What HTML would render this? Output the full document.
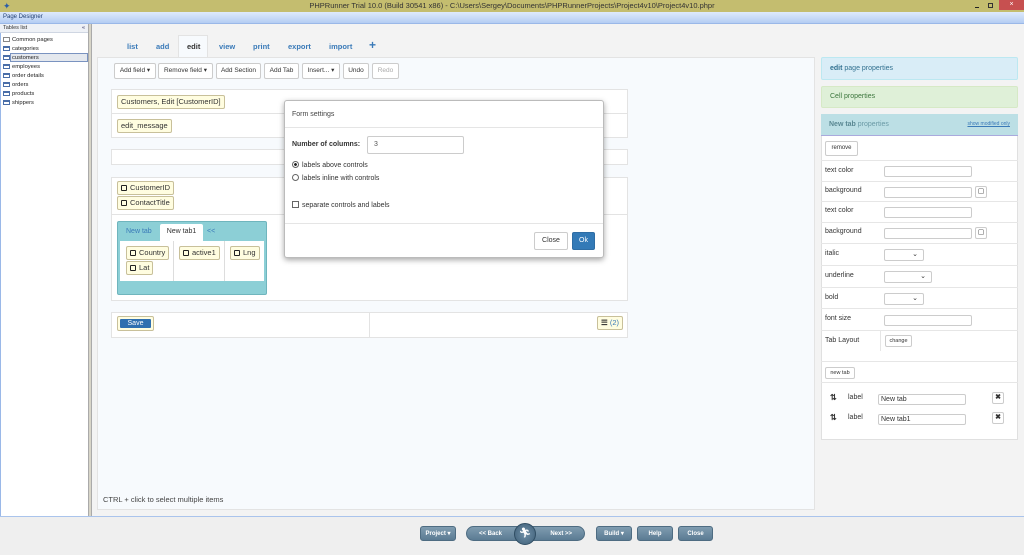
<!DOCTYPE html>
<html><head><meta charset="utf-8"><style>
*{box-sizing:border-box;margin:0;padding:0}
body{width:1024px;height:555px;overflow:hidden;font-family:"Liberation Sans",sans-serif;background:#efefef;position:relative;font-size:7px;color:#333}
.a{position:absolute}
.btn{position:absolute;background:#fff;border:1px solid #ccc;border-radius:2px;font-size:6.5px;color:#333;text-align:center;line-height:14px;height:16px}
.chip{position:absolute;background:#fffde0;border:1px solid #c8c09a;border-radius:2px;font-size:7.5px;line-height:12px;height:14px;padding:0 3px;color:#333}
.chip i{display:inline-block;width:6px;height:6px;border:1.5px solid #222;border-radius:1px;margin-right:3px;vertical-align:-0.5px}
.sec{position:absolute;background:#fff;border:1px solid #e3e3e3}
.tb{position:absolute;font-size:7.5px;font-weight:bold;color:#3a7ab8;top:42px}
.row{position:absolute;left:821px;width:197px;border-bottom:1px solid #e6e6e6;font-size:7px;color:#333}
.inp{position:absolute;background:#fff;border:1px solid #ccc;border-radius:2px;height:11px}
.bb{position:absolute;top:526px;height:15px;background:linear-gradient(#7f9cb0,#5b7b93);border:1px solid #4e6c82;border-radius:3px;color:#fff;font-size:6px;font-weight:bold;text-align:center;line-height:14px}
.li{position:absolute;left:3px;font-size:5.8px;line-height:8px;height:9px;color:#222}
.li b{display:inline-block;width:7px;height:5px;border:1px solid #4a6ea8;border-top-width:2px;margin-right:2px;vertical-align:-0.5px}
</style></head><body>
<div class="a" style="left:0;top:0;width:1024px;height:12px;background:#c4bd6f"></div>
<div class="a" style="left:3px;top:1px;font-size:9px;color:#2a5da8">✦</div>
<div class="a" style="left:0;top:1px;width:1024px;text-align:center;font-size:7.5px;color:#333">PHPRunner Trial 10.0 (Build 30541 x86) - C:\Users\Sergey\Documents\PHPRunnerProjects\Project4v10\Project4v10.phpr</div>
<div class="a" style="left:975px;top:7px;width:4px;height:1px;background:#222"></div>
<div class="a" style="left:988px;top:3px;width:5px;height:5px;border:1px solid #333"></div>
<div class="a" style="left:999px;top:0;width:25px;height:10px;background:#c75050;color:#fff;font-size:7px;text-align:center;line-height:10px">×</div>
<div class="a" style="left:0;top:12px;width:1024px;height:12px;background:linear-gradient(#dfeafc,#b4cdf3);border-bottom:1px solid #9ab8e8"></div>
<div class="a" style="left:3px;top:14px;font-size:6px;color:#1e3c70">Page Designer</div>
<div class="a" style="left:0;top:24px;width:88px;height:493px;background:#fff;border-left:1px solid #9ab8e8"></div>
<div class="a" style="left:0;top:24px;width:88px;height:9px;background:#eef1f6;border-bottom:1px solid #cfd6e2;font-size:5.5px;line-height:9px;padding-left:3px">Tables list<span style="position:absolute;right:3px;color:#225">«</span></div>
<div class="a" style="left:10px;top:53px;width:78px;height:9px;background:#e4e8ee;border:1px solid #7a93c0"></div>
<div class="li" style="top:36px"><b style="border-color:#888;border-top-width:1px"></b>Common pages</div>
<div class="li" style="top:45px"><b></b>categories</div>
<div class="li" style="top:54px"><b></b>customers</div>
<div class="li" style="top:63px"><b></b>employees</div>
<div class="li" style="top:72px"><b></b>order details</div>
<div class="li" style="top:81px"><b></b>orders</div>
<div class="li" style="top:90px"><b></b>products</div>
<div class="li" style="top:99px"><b></b>shippers</div>
<div class="a" style="left:88px;top:24px;width:4px;height:493px;background:#d8d5c8;border-left:1px solid #aaa;border-right:1px solid #aaa"></div>
<div class="a" style="left:92px;top:24px;width:932px;height:493px;background:#f3f3f3"></div>
<div class="a" style="left:0;top:516px;width:1024px;height:1px;background:#aac4ec"></div>
<div class="a" style="left:178px;top:35px;width:30px;height:23px;background:#f7fafd;border:1px solid #e3e3e3;border-bottom:none"></div>
<div class="tb" style="left:127px">list</div><div class="tb" style="left:156px">add</div><div class="tb" style="left:187px;color:#333">edit</div><div class="tb" style="left:219px">view</div><div class="tb" style="left:253px">print</div><div class="tb" style="left:288px">export</div><div class="tb" style="left:329px">import</div><div class="tb" style="left:369px;font-size:12px;top:38px">+</div>
<div class="a" style="left:97px;top:57px;width:718px;height:453px;background:#f7fafd;border:1px solid #e3e3e3"></div>
<div class="a" style="left:208px;top:57px;width:607px;height:1px;background:#e3e3e3"></div>
<div class="btn" style="left:114px;top:63px;width:42px">Add field ▾</div>
<div class="btn" style="left:158px;top:63px;width:55px">Remove field ▾</div>
<div class="btn" style="left:216px;top:63px;width:45px">Add Section</div>
<div class="btn" style="left:264px;top:63px;width:35px">Add Tab</div>
<div class="btn" style="left:302px;top:63px;width:38px">Insert... ▾</div>
<div class="btn" style="left:343px;top:63px;width:26px">Undo</div>
<div class="btn" style="left:372px;top:63px;width:27px;color:#aaa">Redo</div>
<div class="sec" style="left:111px;top:89px;width:517px;height:49px"></div>
<div class="a" style="left:112px;top:113px;width:515px;height:1px;background:#e3e3e3"></div>
<div class="chip" style="left:117px;top:95px">Customers, Edit [CustomerID]</div>
<div class="chip" style="left:117px;top:119px">edit_message</div>
<div class="sec" style="left:111px;top:149px;width:517px;height:16px"></div>
<div class="sec" style="left:111px;top:177px;width:517px;height:124px"></div>
<div class="a" style="left:112px;top:214px;width:515px;height:1px;background:#e3e3e3"></div>
<div class="chip" style="left:117px;top:181px"><i></i>CustomerID</div>
<div class="chip" style="left:117px;top:196px"><i></i>ContactTitle</div>
<div class="a" style="left:117px;top:221px;width:150px;height:74px;background:#8ccfd6;border:1px solid #6fb5bd;border-radius:2px"></div>
<div class="a" style="left:126px;top:228px;font-size:7px;color:#3a7ab8">New tab</div>
<div class="a" style="left:160px;top:224px;width:43px;height:17px;background:#fff;font-size:7px;line-height:16px;text-align:center;border-radius:2px 2px 0 0">New tab1</div>
<div class="a" style="left:207px;top:228px;font-size:7px;color:#3a7ab8">&lt;&lt;</div>
<div class="a" style="left:120px;top:241px;width:144px;height:40px;background:#fff"></div>
<div class="a" style="left:173px;top:241px;width:1px;height:40px;background:#ddd"></div>
<div class="a" style="left:224px;top:241px;width:1px;height:40px;background:#ddd"></div>
<div class="chip" style="left:126px;top:246px"><i></i>Country</div>
<div class="chip" style="left:126px;top:261px"><i></i>Lat</div>
<div class="chip" style="left:179px;top:246px"><i></i>active1</div>
<div class="chip" style="left:230px;top:246px"><i></i>Lng</div>
<div class="sec" style="left:111px;top:312px;width:517px;height:26px"></div>
<div class="a" style="left:369px;top:313px;width:1px;height:24px;background:#e3e3e3"></div>
<div class="chip" style="left:117px;top:316px;width:37px;height:15px;padding:2px"><div style="background:#2f6fb0;color:#fff;font-size:7px;text-align:center;line-height:9px;border-radius:1px;height:9px">Save</div></div>
<div class="chip" style="left:597px;top:316px;color:#3a7ab8"><b style="color:#222">☰</b> (2)</div>
<div class="a" style="left:103px;top:495px;font-size:7.5px;color:#444">CTRL + click to select multiple items</div>
<div class="a" style="left:284px;top:100px;width:320px;height:158px;background:#fff;border:1px solid #bbb;border-radius:3px;box-shadow:0 2px 6px rgba(0,0,0,.35)"></div>
<div class="a" style="left:292px;top:111px;font-size:7px;color:#444">Form settings</div>
<div class="a" style="left:285px;top:127px;width:318px;height:1px;background:#e5e5e5"></div>
<div class="a" style="left:292px;top:141px;font-size:7px;font-weight:bold;color:#333">Number of columns:</div>
<div class="inp" style="left:367px;top:136px;width:97px;height:18px;font-size:7px;line-height:16px;padding-left:6px;color:#555">3</div>
<div class="a" style="left:292px;top:161px;font-size:7px;color:#333"><span style="display:inline-block;width:7px;height:7px;border:1px solid #666;border-radius:50%;vertical-align:-1px;margin-right:3px;background:radial-gradient(#222 35%,#fff 45%)"></span>labels above controls</div>
<div class="a" style="left:292px;top:174px;font-size:7px;color:#333"><span style="display:inline-block;width:7px;height:7px;border:1px solid #666;border-radius:50%;vertical-align:-1px;margin-right:3px"></span>labels inline with controls</div>
<div class="a" style="left:292px;top:201px;font-size:7px;color:#333"><span style="display:inline-block;width:7px;height:7px;border:1px solid #666;vertical-align:-1px;margin-right:3px"></span>separate controls and labels</div>
<div class="a" style="left:285px;top:223px;width:318px;height:1px;background:#e5e5e5"></div>
<div class="btn" style="left:534px;top:232px;width:34px;height:18px;line-height:16px;font-size:7px">Close</div>
<div class="a" style="left:572px;top:232px;width:23px;height:18px;background:#337ab7;border:1px solid #2e6da4;border-radius:2px;color:#fff;font-size:7px;text-align:center;line-height:16px">Ok</div>
<div class="a" style="left:821px;top:57px;width:197px;height:23px;background:#d9edf7;border:1px solid #bce8f1;border-radius:2px;font-size:7px;line-height:21px;padding-left:8px;color:#31708f"><b>edit</b> page properties</div>
<div class="a" style="left:821px;top:86px;width:197px;height:22px;background:#dff0d8;border:1px solid #d6e9c6;border-radius:2px;font-size:7px;line-height:20px;padding-left:8px;color:#3c763d">Cell properties</div>
<div class="a" style="left:821px;top:114px;width:197px;height:326px;background:#fff;border:1px solid #e0e0e0"></div>
<div class="a" style="left:821px;top:114px;width:197px;height:22px;background:#bcdfe5;border-bottom:1px solid #aad;font-size:7px;line-height:21px;padding-left:8px;color:#6a9aa6"><b style="color:#5a8893">New tab</b> properties<span style="position:absolute;right:8px;font-size:5px;text-decoration:underline;color:#3a7ab8">show modified only</span></div>
<div class="btn" style="left:825px;top:141px;width:33px;height:15px;line-height:13px;font-size:6px">remove</div>
<div class="row" style="top:136px;height:25px"></div>
<div class="row" style="top:161px;height:21px"><span class="a" style="left:4px;top:6px">text color</span></div>
<div class="row" style="top:182px;height:20px"><span class="a" style="left:4px;top:5px">background</span></div>
<div class="row" style="top:202px;height:21px"><span class="a" style="left:4px;top:5px">text color</span></div>
<div class="row" style="top:223px;height:21px"><span class="a" style="left:4px;top:5px">background</span></div>
<div class="row" style="top:244px;height:22px"><span class="a" style="left:4px;top:6px">italic</span></div>
<div class="row" style="top:266px;height:22px"><span class="a" style="left:4px;top:6px">underline</span></div>
<div class="row" style="top:288px;height:21px"><span class="a" style="left:4px;top:6px">bold</span></div>
<div class="row" style="top:309px;height:22px"><span class="a" style="left:4px;top:6px">font size</span></div>
<div class="row" style="top:331px;height:31px"><span class="a" style="left:4px;top:6px">Tab Layout</span><span class="a" style="left:59px;top:0;width:1px;height:20px;background:#e6e6e6"></span></div>
<div class="row" style="top:362px;height:21px"></div>
<div class="inp" style="left:884px;top:166px;width:88px"></div>
<div class="inp" style="left:884px;top:187px;width:88px"></div>
<div class="inp" style="left:975px;top:186px;width:12px;height:12px;font-size:7px;text-align:center;line-height:10px">▢</div>
<div class="inp" style="left:884px;top:207px;width:88px"></div>
<div class="inp" style="left:884px;top:228px;width:88px"></div>
<div class="inp" style="left:975px;top:227px;width:12px;height:12px;font-size:7px;text-align:center;line-height:10px">▢</div>
<div class="inp" style="left:884px;top:249px;width:40px;height:12px;font-size:7px;text-align:right;padding-right:5px;line-height:10px">⌄</div>
<div class="inp" style="left:884px;top:271px;width:48px;height:12px;font-size:7px;text-align:right;padding-right:5px;line-height:10px">⌄</div>
<div class="inp" style="left:884px;top:293px;width:40px;height:12px;font-size:7px;text-align:right;padding-right:5px;line-height:10px">⌄</div>
<div class="inp" style="left:884px;top:315px;width:88px"></div>
<div class="btn" style="left:885px;top:335px;width:27px;height:12px;line-height:10px;font-size:5.5px">change</div>
<div class="btn" style="left:825px;top:367px;width:30px;height:12px;line-height:10px;font-size:5.5px">new tab</div>
<div class="a" style="left:830px;top:393px;font-size:8px;font-weight:bold">⇅</div>
<div class="a" style="left:848px;top:394px;font-size:7px">label</div>
<div class="inp" style="left:878px;top:394px;width:88px;font-size:7px;line-height:9px;padding-left:2px">New tab</div>
<div class="inp" style="left:992px;top:392px;width:12px;height:12px;font-size:7px;text-align:center;line-height:10px;font-weight:bold">✖</div>
<div class="a" style="left:830px;top:413px;font-size:8px;font-weight:bold">⇅</div>
<div class="a" style="left:848px;top:414px;font-size:7px">label</div>
<div class="inp" style="left:878px;top:414px;width:88px;font-size:7px;line-height:9px;padding-left:2px">New tab1</div>
<div class="inp" style="left:992px;top:412px;width:12px;height:12px;font-size:7px;text-align:center;line-height:10px;font-weight:bold">✖</div>
<div class="bb" style="left:420px;width:36px">Project ▾</div>
<div class="bb" style="left:466px;width:119px;border-radius:8px"><span style="position:absolute;left:12px">&lt;&lt; Back</span><span style="position:absolute;right:12px">Next &gt;&gt;</span></div>
<div class="a" style="left:514px;top:523px;width:22px;height:22px;border-radius:50%;background:radial-gradient(#6f90a8,#3f5f78);border:1px solid #2f4d63;color:#fff;font-size:10px;text-align:center;line-height:20px">🏃︎</div>
<div class="bb" style="left:596px;width:36px">Build ▾</div>
<div class="bb" style="left:637px;width:36px">Help</div>
<div class="bb" style="left:678px;width:35px">Close</div>
</body></html>
